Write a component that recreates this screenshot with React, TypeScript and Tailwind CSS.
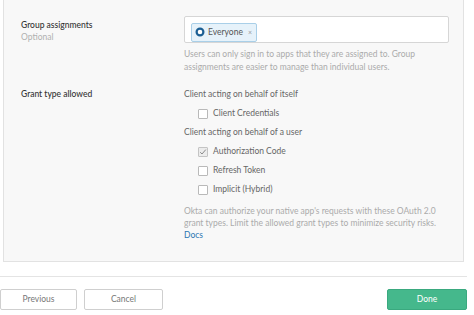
import React from "react"

const Check = ({ checked = false, label }: { checked?: boolean; label: string }) => (
  <div className="h-[19px] flex items-center pl-[14px]">
    <span className={`w-[10px] h-[10px] border rounded-[1px] flex items-center justify-center ${checked ? "bg-[#ececec] border-[#c4c4c4]" : "bg-white border-[#b9b9b9]"}`}>
      {checked && (
        <svg width="8" height="8" viewBox="0 0 8 8">
          <path d="M1.2 4.2 L3 6 L6.8 1.6" fill="none" stroke="#8a8a8a" strokeWidth="1" />
        </svg>
      )}
    </span>
    <span className="ml-[5px] text-[8.5px] text-[#666]">{label}</span>
  </div>
)

const App = () => {
  return (
    <div className="w-[474px] h-[315px] bg-white overflow-hidden font-['Lato',sans-serif]">
      <div className="ml-[3px] w-[461px] h-[262px] bg-[#f8f8f8] border-x border-b border-[#e2e2e2] pl-[17px]">
        <div className="flex pt-[16px]">
          <div className="w-[163px] pt-[3px] leading-[12px]">
            <div className="text-[8.5px] font-medium text-[#333]">Group assignments</div>
            <div className="text-[8.5px] text-[#b0b0b0]">Optional</div>
          </div>
          <div className="w-[265px]">
            <div className="h-[27px] bg-white border border-[#d6d6d6] rounded-[2px] pl-[6px] pt-[2px]">
              <div className="inline-flex items-center h-[19px] w-[66px] bg-[#e6f2fa] border border-[#a9cfe8] rounded-[2px] pl-[3px]">
                <svg width="10" height="10" viewBox="0 0 10 10">
                  <circle cx="5" cy="5" r="3.4" fill="white" stroke="#1b5f94" strokeWidth="2.2" />
                </svg>
                <span className="ml-[3px] text-[8.5px] text-[#555]">Everyone</span>
                <span className="ml-[5px] text-[7px] text-[#9a9a9a]">×</span>
              </div>
            </div>
            <p className="mt-[5px] text-[8.5px] leading-[13px] text-[#ababab]">
              Users can only sign in to apps that they are assigned to. Group assignments are easier to manage than individual users.
            </p>
          </div>
        </div>

        <div className="flex mt-[11px]">
          <div className="w-[163px] h-[19px] flex items-center text-[8.5px] font-medium text-[#333]">Grant type allowed</div>
          <div className="w-[265px]">
            <div className="h-[19px] flex items-center text-[8.5px] text-[#666]">Client acting on behalf of itself</div>
            <Check label="Client Credentials" />
            <div className="h-[19px] flex items-center text-[8.5px] text-[#666]">Client acting on behalf of a user</div>
            <Check checked label="Authorization Code" />
            <Check label="Refresh Token" />
            <Check label="Implicit (Hybrid)" />
            <p className="mt-[6px] text-[8.5px] leading-[12px] text-[#ababab]">
              Okta can authorize your native app's requests with these OAuth 2.0 grant types. Limit the allowed grant types to minimize security risks.
            </p>
            <div className="text-[8.5px] leading-[12px] text-[#2c77b3]">Docs</div>
          </div>
        </div>
      </div>

      <div className="mt-[14px] w-[467px] border-t border-[#e4e4e4]" />

      <div className="mt-[12px] flex items-center w-[467px]">
        <button className="w-[77px] h-[21px] bg-white border border-[#cfcfcf] rounded-[2px] text-[8.5px] text-[#777]">Previous</button>
        <button className="ml-[7px] w-[79px] h-[21px] bg-white border border-[#cfcfcf] rounded-[2px] text-[8.5px] text-[#777]">Cancel</button>
        <button className="ml-auto w-[80px] h-[21px] bg-[#45b88c] border border-[#3aa97f] rounded-[2px] text-[8.5px] text-white">Done</button>
      </div>
    </div>
  )
}

export default App
